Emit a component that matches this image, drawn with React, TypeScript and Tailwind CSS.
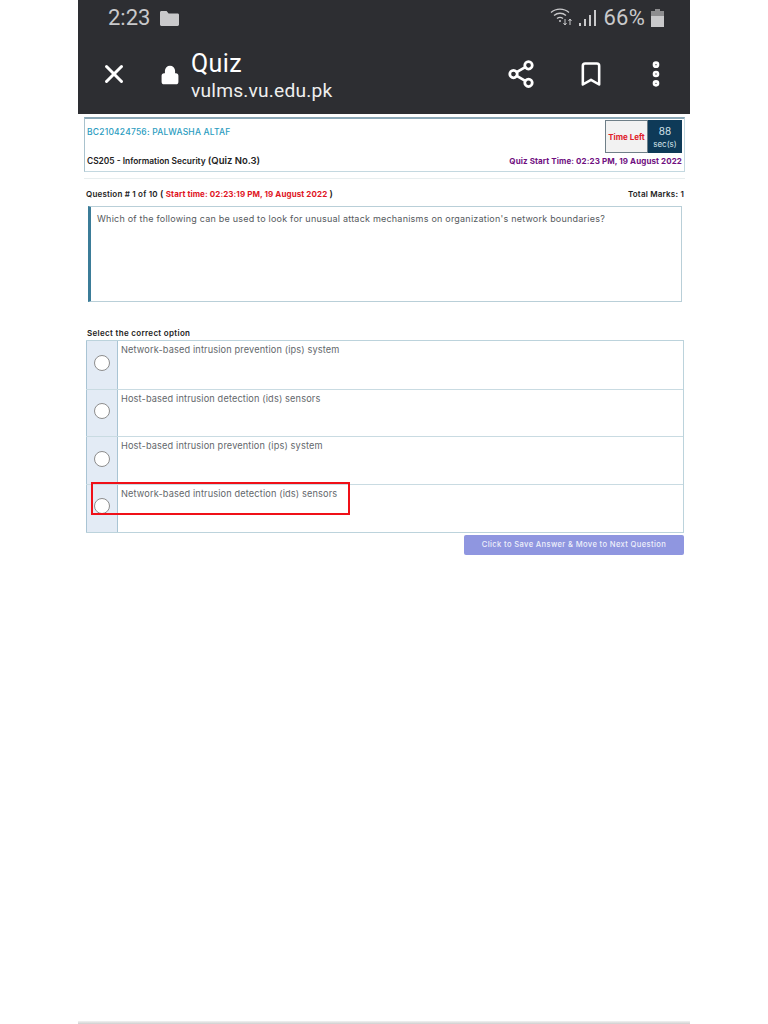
import { Lock, MoreVertical, Bookmark, Share2, X } from "lucide-react";

const OPTIONS = [
  "Network-based intrusion prevention (ips) system",
  "Host-based intrusion detection (ids) sensors",
  "Host-based intrusion prevention (ips) system",
  "Network-based intrusion detection (ids) sensors",
];

const poppins = "font-['Inter','Open_Sans',sans-serif]";

function StatusBar() {
  return (
    <div className="flex h-[36px] items-center justify-between pl-[30px] pr-[26px] font-['Roboto',sans-serif] text-[#c9c9cb]">
      <div className="flex items-center gap-[10px]">
        <span className="text-[22px] leading-none">2:23</span>
        <svg width="19" height="15" viewBox="0 0 19 15" fill="#c9c9cb">
          <path d="M0 1.5C0 .7.6 0 1.4 0h5.2l2 2.4h9c.8 0 1.4.6 1.4 1.4v9.8c0 .8-.6 1.4-1.4 1.4H1.4C.6 15 0 14.4 0 13.6z" />
        </svg>
      </div>
      <div className="flex items-center">
        <svg width="24" height="20" viewBox="0 0 24 20" fill="none" stroke="#c9c9cb" strokeWidth="1.3" className="-mt-[3px]">
          <path d="M1 5.5C6 1 14 1 19 5.5" />
          <path d="M4 8.5C7.5 5.5 12.5 5.5 16 8.5" />
          <path d="M7 11.5c2-1.6 4-1.6 6 0" />
          <circle cx="10" cy="14" r="1" fill="#c9c9cb" stroke="none" />
          <path d="M15 12v6M13.5 16l1.5 2 1.5-2M20 18v-6M18.5 14l1.5-2 1.5 2" strokeWidth="1" />
        </svg>
        <svg width="20" height="17" viewBox="0 0 20 17" fill="#c9c9cb" className="ml-[4px]">
          <rect x="1" y="13" width="2" height="3" />
          <rect x="6" y="9" width="2" height="7" />
          <rect x="11" y="5" width="2" height="11" />
          <rect x="16" y="0" width="2" height="16" />
        </svg>
        <span className="ml-[6px] text-[22px] leading-none tracking-[0.2px]">66%</span>
        <svg width="13" height="18" viewBox="0 0 13 18" className="ml-[6px]">
          <path d="M4 0h5v2h4v16H0V2h4z" fill="#8d8d8f" />
          <rect x="0" y="7" width="13" height="11" fill="#c9c9cb" />
        </svg>
      </div>
    </div>
  );
}

function Toolbar() {
  return (
    <div className="flex h-[78px] items-center pb-[2px] pl-[21px] pr-[18px] text-white">
      <X size={30} strokeWidth={2.4} className="mr-[31px]" />
      <Lock size={20} strokeWidth={2.2} fill="#ffffff" className="mr-[11px] mt-[1px]" />
      <div className="mt-[5px] font-['Roboto',sans-serif]">
        <div className="text-[25px] leading-[28px] tracking-[0.4px]">Quiz</div>
        <div className="text-[19.2px] leading-[26px] tracking-[0.2px] text-[#eeeeee]">vulms.vu.edu.pk</div>
      </div>
      <div className="ml-auto flex items-center">
        <Share2 size={30} strokeWidth={2.2} className="mr-[41px]" />
        <Bookmark size={28} strokeWidth={2.2} className="mr-[35px]" />
        <MoreVertical size={32} strokeWidth={3} />
      </div>
    </div>
  );
}

function InfoCard() {
  return (
    <div className="ml-[6px] mt-[3px] h-[55px] w-[601px] border-b border-l border-r border-t-2 border-b-[#c4d8e0] border-l-[#a9c2cd] border-r-[#c4d8e0] border-t-[#8aa7b6] pl-[2px] pr-[2px]">
      <div className="flex h-[34px] items-start justify-between">
        <span className="mt-[7px] text-[8.5px] font-medium leading-[12px] tracking-[0.2px] text-[#2a9cc0]">BC210424756: PALWASHA ALTAF</span>
        <div className="mt-[1px] flex h-[33px] w-[77px]">
          <div className="flex w-[43px] items-center justify-center border border-[#6f7f88] bg-[#f2f2f2] text-[8px] font-bold text-[#e0202a]">
            Time Left
          </div>
          <div className="flex w-[34px] flex-col items-center justify-center bg-[#0e3a58] text-[#d5e3ea]">
            <span className="text-[10px] leading-[14px]">88</span>
            <span className="text-[8px] leading-[12px]">sec(s)</span>
          </div>
        </div>
      </div>
      <div className="mt-[1px] flex items-center justify-between">
        <span className="text-[8.4px] font-semibold leading-[14px] text-[#222222]">
          CS205 - Information Security <span className="text-[9.5px]">(Quiz No.3)</span>
        </span>
        <span className="text-[8px] font-bold leading-[14px] tracking-[0.1px] text-[#6f0f7f]">Quiz Start Time: 02:23 PM, 19 August 2022</span>
      </div>
    </div>
  );
}

function QuestionHead() {
  return (
    <>
      <div className="ml-[6px] mt-[6px] h-px w-[601px] bg-[#e8eeef]" />
      <div className="ml-[8px] mt-[8px] flex w-[598px] items-center justify-between text-[8px] font-semibold leading-[14px] tracking-[0.2px] text-[#222222]">
        <span>
          Question # 1 of 10 <span className="text-[9px]">(</span>{" "}
          <span className="font-bold tracking-[0.1px] text-[#e0141e]">Start time: 02:23:19 PM, 19 August 2022</span>{" "}
          <span className="text-[9px]">)</span>
        </span>
        <span>Total Marks: 1</span>
      </div>
      <div className="ml-[10px] mt-[5px] h-[96px] w-[594px] border border-l-[3px] border-[#b9cfd8] border-l-[#3b7c98] pl-[6px] pt-[6px] text-[9px] leading-[12px] tracking-[0.22px] text-[#55595d]">
        Which of the following can be used to look for unusual attack mechanisms on organization's network boundaries?
      </div>
    </>
  );
}

function Options() {
  return (
    <>
      <div className="ml-[9px] mt-[25px] text-[8px] font-semibold leading-[12px] tracking-[0.32px] text-[#222222]">Select the correct option</div>
      <div className="relative ml-[8px] mt-[1px] w-[598px] border-b border-r border-t border-[#bcd3dc]">
        {OPTIONS.map((text, i) => (
          <div key={text} className={`flex h-[47.7px] ${i > 0 ? "border-t border-[#c9dbe2]" : ""}`}>
            <div className="flex w-[32px] shrink-0 items-center justify-center border-l border-r border-[#a9c4d4] bg-[#e3ebf5] pb-[4px]">
              <div className="h-[16px] w-[16px] rounded-full border border-[#8d8d8d] bg-white" />
            </div>
            <div className="pl-[3px] pt-[2px] text-[9.2px] leading-[13px] tracking-[0.14px] text-[#63676b]">{text}</div>
          </div>
        ))}
        <div className="absolute left-[5px] top-[141px] h-[33px] w-[259px] border-2 border-[#f01018]" />
      </div>
      <div className="ml-[386px] mt-[2px] flex h-[20px] w-[220px] items-center justify-center rounded-[2px] bg-[#8f96e0] text-[7.6px] font-medium tracking-[0.36px] text-[#eef0fb]">
        Click to Save Answer &amp; Move to Next Question
      </div>
    </>
  );
}

export default function App() {
  return (
    <div className="flex h-[1024px] w-[768px] flex-col overflow-hidden bg-white">
      <div className={`ml-[78px] flex h-full w-[612px] flex-col ${poppins}`}>
        <div className="h-[114px] shrink-0 bg-[#2d2e32]">
          <StatusBar />
          <Toolbar />
        </div>
        <InfoCard />
        <QuestionHead />
        <Options />
        <div className="mt-auto h-[3px] bg-gradient-to-b from-[#f2f2f2] to-[#cfcfcf]" />
      </div>
    </div>
  );
}
